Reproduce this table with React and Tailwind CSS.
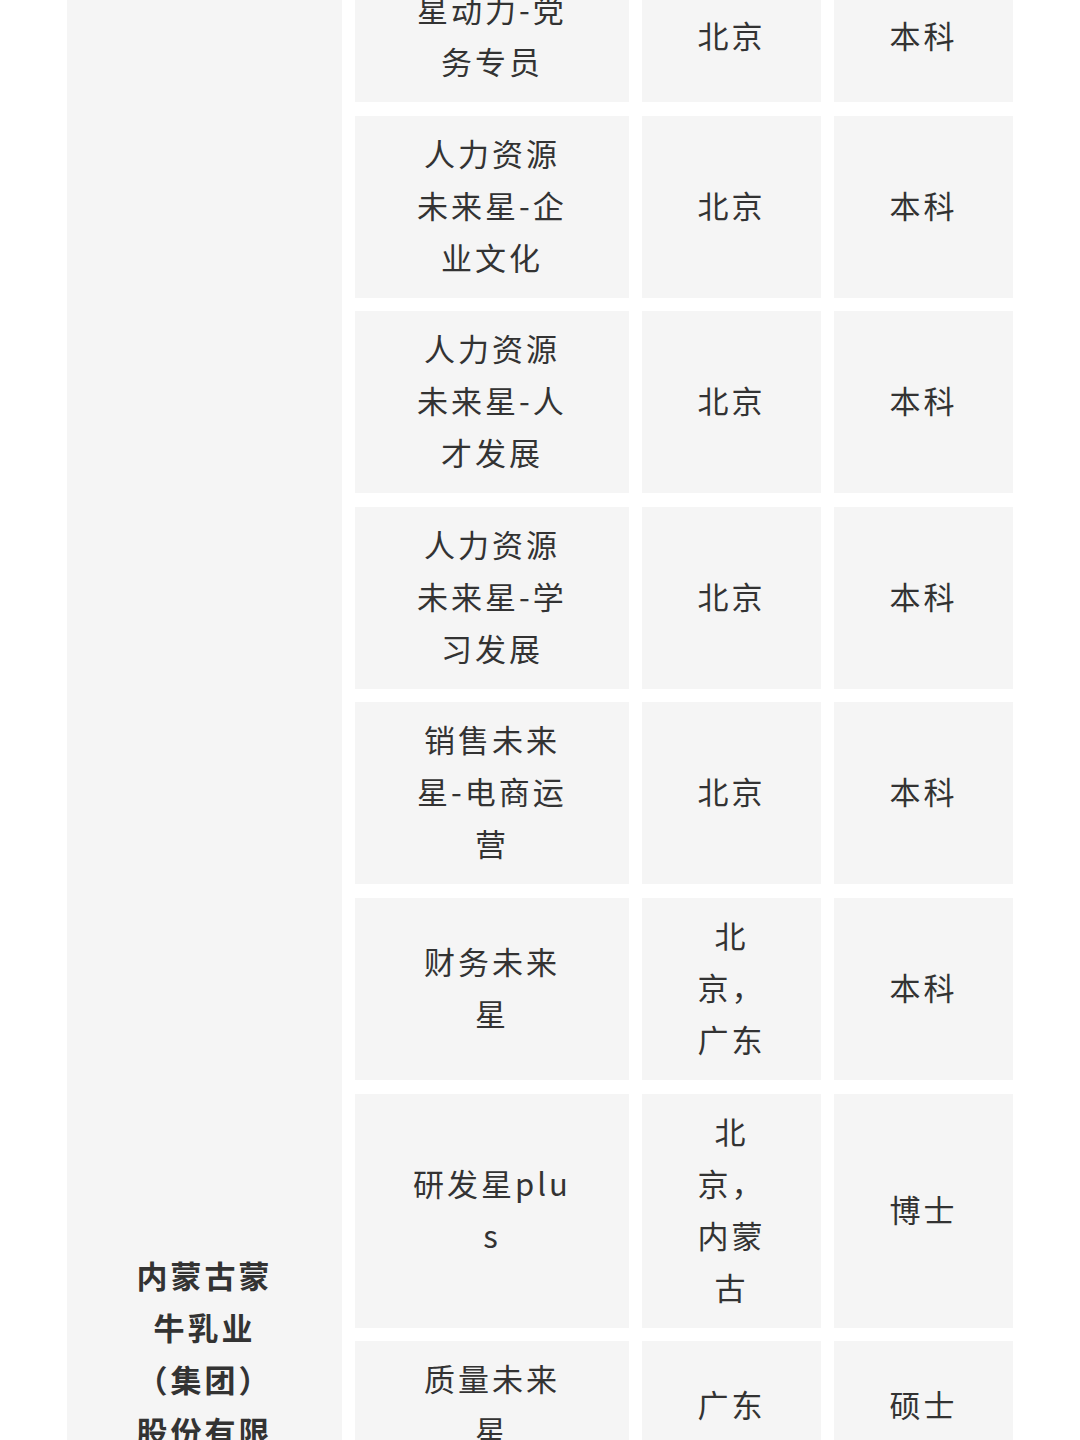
const font = {
  fontFamily: '"Noto Sans CJK SC", "Noto Sans", sans-serif',
};

const rows = [
  { job: '星动力-党务专员', city: '北京', degree: '本科' },
  { job: '人力资源未来星-企业文化', city: '北京', degree: '本科' },
  { job: '人力资源未来星-人才发展', city: '北京', degree: '本科' },
  { job: '人力资源未来星-学习发展', city: '北京', degree: '本科' },
  { job: '销售未来星-电商运营', city: '北京', degree: '本科' },
  { job: '财务未来星', city: '北京，广东', degree: '本科' },
  { job: '研发星plus', city: '北京，内蒙古', degree: '博士' },
  { job: '质量未来星', city: '广东', degree: '硕士' },
];

function Cell({ children, width }) {
  return (
    <div className="flex items-center justify-center bg-[#f5f5f5] pt-[11px] pb-[15px]">
      <div className={`${width} break-all text-center`}>{children}</div>
    </div>
  );
}

export default function App() {
  return (
    <div
      className="h-[1440px] overflow-hidden bg-white text-[31px] leading-[52px] tracking-[3px] text-[#333333]"
      style={font}
    >
      <div className="-mt-[28px] flex gap-x-[13px] px-[67px]">
        {/* company column, spans all rows */}
        <div className="flex min-h-[2814px] w-[275px] shrink-0 items-center justify-center bg-[#f5f5f5]">
          <div className="w-[160px] text-center font-bold">
            内蒙古蒙牛乳业（集团）股份有限公司
          </div>
        </div>

        {/* job rows */}
        <div className="flex flex-1 flex-col gap-y-[13.6px] self-start">
          {rows.map((r, i) => (
            <div key={i} className="grid grid-cols-[274px_179px_179px] gap-x-[13px]">
              <Cell width="w-[160px]">{r.job}</Cell>
              <Cell width="w-[80px]">{r.city}</Cell>
              <Cell width="w-[140px]">{r.degree}</Cell>
            </div>
          ))}
        </div>
      </div>
    </div>
  );
}
